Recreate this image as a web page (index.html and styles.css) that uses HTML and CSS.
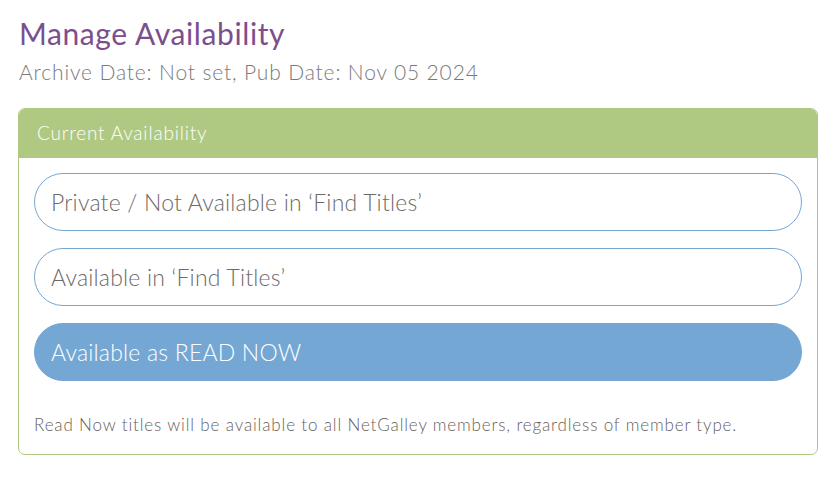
FILE: index.html
```html
<!DOCTYPE html>
<html>
<head>
<meta charset="utf-8">
<link rel="stylesheet" href="styles.css">
</head>
<body>
<div class="page">
  <h1 class="title">Manage Availability</h1>
  <p class="subtitle">Archive Date: Not set, Pub Date: Nov 05 2024</p>
  <div class="panel">
    <div class="panel-head">Current Availability</div>
    <div class="panel-body">
      <div class="option">Private / Not Available in ‘Find Titles’</div>
      <div class="option">Available in ‘Find Titles’</div>
      <div class="option option-active">Available as READ NOW</div>
      <p class="note">Read Now titles will be available to all NetGalley members, regardless of member type.</p>
    </div>
  </div>
</div>
</body>
</html>
```
FILE: styles.css
```css
* { box-sizing: border-box; }
html, body { margin: 0; padding: 0; background: #fff; }
body { font-family: Lato, "Open Sans", "Liberation Sans", sans-serif; font-weight: 300; }
.page { padding: 15px 22px 0 18px; }
.title {
  margin: 0 0 0 1px;
  font-size: 30px;
  font-weight: 400;
  color: #7b4f8e;
  line-height: 36px;
  letter-spacing: 0.6px;
}
.subtitle {
  margin: 8px 0 0 1px;
  font-size: 21px;
  color: #7a7a7a;
  line-height: 26px;
  letter-spacing: 0.85px;
}
.panel {
  margin-top: 23px;
  border: 1px solid #b0c982;
  border-radius: 7px;
  overflow: hidden;
}
.panel-head {
  background: #b0c982;
  color: #fff;
  font-size: 19px;
  height: 49px;
  line-height: 48px;
  padding-left: 18px;
  letter-spacing: 0.8px;
}
.panel-body {
  padding: 15px 15px 0 15px;
  display: flex;
  flex-direction: column;
  gap: 17px;
}
.option {
  height: 58px;
  border: 1px solid #75a6d3;
  border-radius: 29px;
  font-size: 23px;
  color: #6e6a68;
  line-height: 56px;
  padding-left: 16px;
  letter-spacing: 0.2px;
}
.option-active {
  background: #74a7d3;
  color: #fff;
}
.note {
  margin: 16px 0 0 0;
  font-size: 17px;
  color: #675f5d;
  line-height: 22px;
  height: 40px;
  letter-spacing: 0.85px;
}
```
